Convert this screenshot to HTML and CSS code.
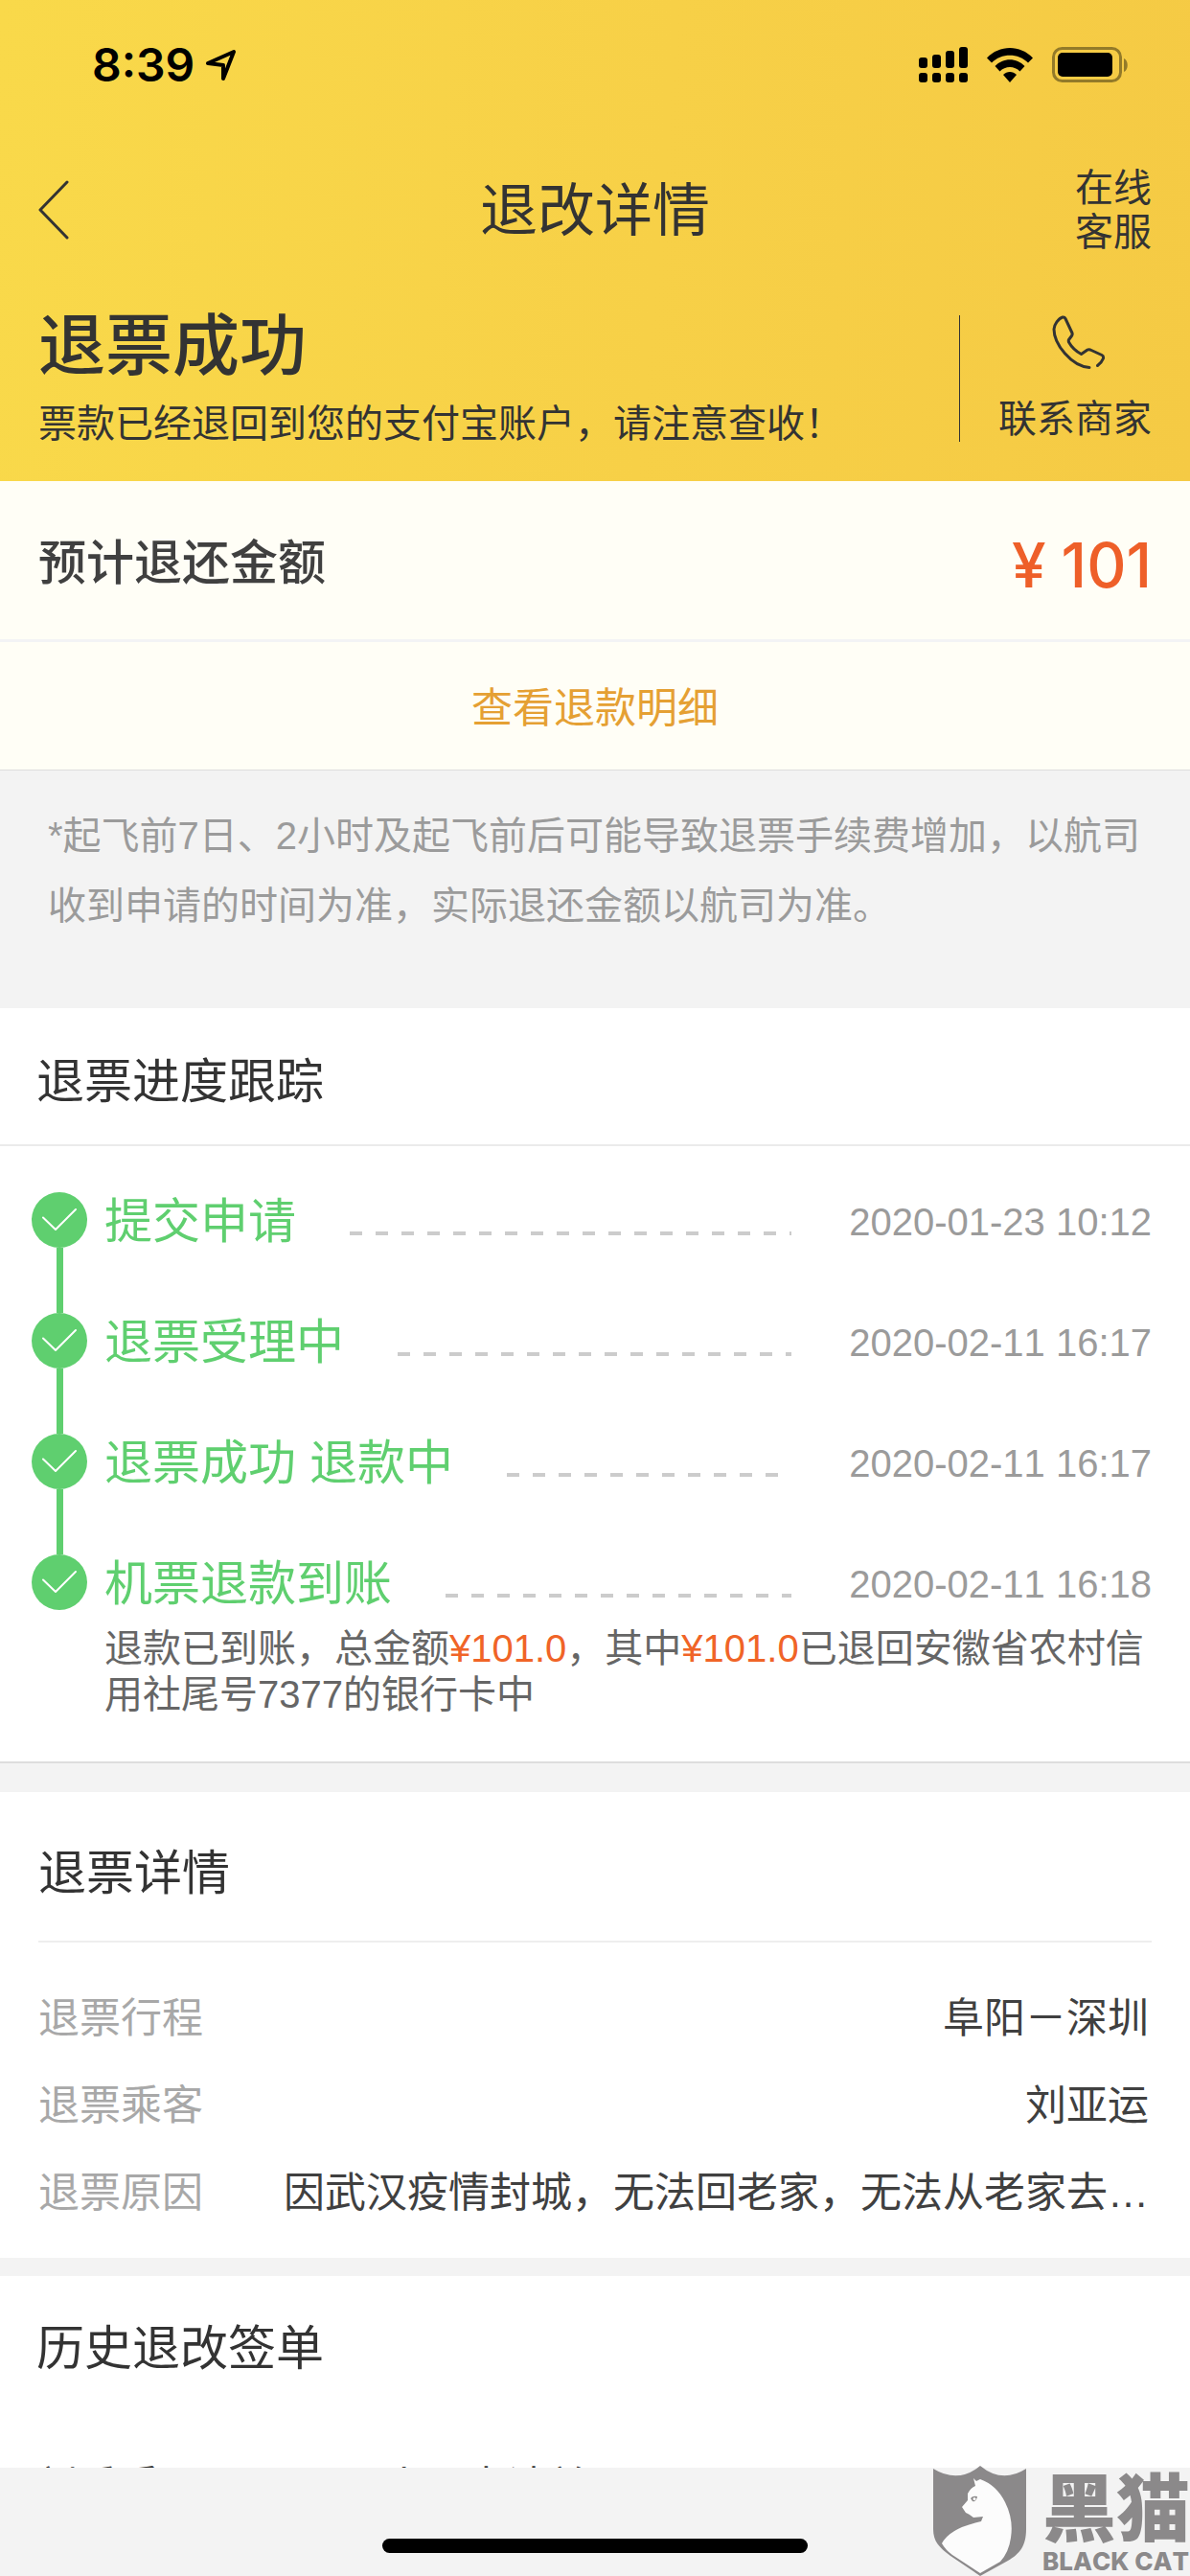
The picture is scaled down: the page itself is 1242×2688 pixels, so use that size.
FILE: index.html
```html
<!DOCTYPE html>
<html lang="zh-CN">
<head>
<meta charset="utf-8">
<meta name="viewport" content="width=device-width, initial-scale=1">
<title>退改详情</title>
<link rel="stylesheet" href="styles.css">
</head>
<body>
<div class="app">
  <header class="header">
    <div class="status-bar">
      <div class="status-left">
        <span class="clock">8:39</span>
        <svg class="icon-location" width="32" height="34" viewBox="0 0 32 34" aria-hidden="true"><path d="M29 3 18 31V17L2 15Z" fill="none" stroke="#000" stroke-width="4" stroke-linejoin="round"/></svg>
      </div>
      <div class="status-right">
        <svg width="51" height="38" viewBox="0 0 51 38" aria-hidden="true">
          <rect x="0" y="11" width="9" height="11" rx="3"/><rect x="14" y="8" width="9" height="14" rx="3"/><rect x="28" y="4" width="9" height="18" rx="3"/><rect x="42" y="0" width="9" height="22" rx="3"/>
          <rect x="0" y="27" width="9" height="10" rx="3"/><rect x="14" y="27" width="9" height="10" rx="3"/><rect x="28" y="27" width="9" height="10" rx="3"/><rect x="42" y="27" width="9" height="10" rx="3"/>
        </svg>
        <svg width="48" height="36" viewBox="0 0 48 36" aria-hidden="true">
          <path d="M0 10.500C13-3.500 35-3.500 48 10.500L43 15.500C33 5 15 5 5 15.500Z"/>
          <path d="M8.500 19C17 10 31 10 39.500 19L34.500 24.500C29 18.500 19 18.500 13.500 24.500Z"/>
          <path d="M17 28C21 24 27 24 31 28L24 36Z"/>
        </svg>
        <svg width="80" height="38" viewBox="0 0 80 38" aria-hidden="true">
          <rect x="1.500" y="1.500" width="70" height="34" rx="9" fill="none" stroke="#000" stroke-opacity=".4" stroke-width="3"/>
          <rect x="6" y="6" width="57" height="25" rx="5"/>
          <path d="M75 12C80 14 80 24 75 26Z" fill-opacity=".4"/>
        </svg>
      </div>
    </div>
    <nav class="nav">
      <a class="nav-back" href="#" aria-label="返回"><svg width="34" height="62" viewBox="0 0 34 62" aria-hidden="true"><path d="M30 2 2 31 30 60" fill="none" stroke="#333" stroke-width="3" stroke-linecap="round" stroke-linejoin="round"/></svg></a>
      <h1 class="nav-title">退改详情</h1>
      <a class="nav-service" href="#">在线<br>客服</a>
    </nav>
    <div class="result">
      <div class="result-text">
        <h2 class="result-title">退票成功</h2>
        <p class="result-desc">票款已经退回到您的支付宝账户，请注意查收！</p>
      </div>
      <a class="contact" href="#">
        <svg width="64" height="56" viewBox="-8 0 64 56" aria-hidden="true"><path d="M39 54.500C20 53 2 30 2 14.500C2 10 7 3 11 2Q13 1.500 14 3.500L21 18.500Q21.500 20 20.500 21.500L17.500 25.500Q17 26.500 17.500 28Q22 36 30.500 40.500L37 36Q38 35.500 40 36L52 41.500Q54 42.500 53.500 45Q52 49 47.500 52.500" fill="none" stroke="#333" stroke-width="3" stroke-linecap="round" stroke-linejoin="round"/></svg>
        <span>联系商家</span>
      </a>
    </div>
  </header>

  <main class="content">
    <section class="amount">
      <div class="amount-row">
        <h3 class="amount-label">预计退还金额</h3>
        <span class="amount-value"><span>¥</span><span>101</span></span>
      </div>
      <a class="amount-link" href="#">查看退款明细</a>
    </section>
    <p class="note">*起飞前7日、2小时及起飞前后可能导致退票手续费增加，以航司收到申请的时间为准，实际退还金额以航司为准。</p>

    <section class="progress">
      <h3 class="section-title progress-title">退票进度跟踪</h3>
      <ol class="steps">
        <li class="step">
          <svg class="step-mark" width="58" height="58" viewBox="0 0 58 58" aria-hidden="true"><circle cx="29" cy="29" r="29"/><path d="M12 26.500 25 39 46 18"/></svg>
          <span class="step-name">提交申请</span><span class="step-dash"></span><time class="step-time">2020-01-23 10:12</time>
        </li>
        <li class="step">
          <svg class="step-mark" width="58" height="58" viewBox="0 0 58 58" aria-hidden="true"><circle cx="29" cy="29" r="29"/><path d="M12 26.500 25 39 46 18"/></svg>
          <span class="step-name">退票受理中</span><span class="step-dash"></span><time class="step-time">2020-02-11 16:17</time>
        </li>
        <li class="step">
          <svg class="step-mark" width="58" height="58" viewBox="0 0 58 58" aria-hidden="true"><circle cx="29" cy="29" r="29"/><path d="M12 26.500 25 39 46 18"/></svg>
          <span class="step-name">退票成功 退款中</span><span class="step-dash"></span><time class="step-time">2020-02-11 16:17</time>
        </li>
        <li class="step">
          <svg class="step-mark" width="58" height="58" viewBox="0 0 58 58" aria-hidden="true"><circle cx="29" cy="29" r="29"/><path d="M12 26.500 25 39 46 18"/></svg>
          <span class="step-name">机票退款到账</span><span class="step-dash"></span><time class="step-time">2020-02-11 16:18</time>
        </li>
      </ol>
      <p class="step-detail">退款已到账，总金额<em>¥101.0</em>，其中<em>¥101.0</em>已退回安徽省农村信用社尾号7377的银行卡中</p>
    </section>

    <section class="details">
      <h3 class="section-title details-title">退票详情</h3>
      <dl class="details-list">
        <div class="detail"><dt>退票行程</dt><dd>阜阳－深圳</dd></div>
        <div class="detail"><dt>退票乘客</dt><dd>刘亚运</dd></div>
        <div class="detail"><dt>退票原因</dt><dd>因武汉疫情封城，无法回老家，无法从老家去…</dd></div>
      </dl>
    </section>

    <section class="history">
      <h3 class="section-title">历史退改签单</h3>
      <div class="history-row"><span>刘乘受理</span><span>小王申请单</span></div>
    </section>
  </main>

  <footer class="home-area"><div class="home-bar"></div></footer>

  <div class="watermark">
    <svg width="98" height="115" viewBox="0 0 98 115" aria-hidden="true">
      <path d="M0 3Q26 19 49 0Q72 19 97 3V66C97 84 90 92 78 99L49 115 18 94C6 85 0 79 0 66Z" fill="#8b898a"/>
      <path d="M42 13 45 16 49 14Q66 20 75 38Q84 56 81 75Q79 90 70 100L49 112 20 93Q13 88 9 81Q17 65 50 58L52 53 42 54Q37 50 34 49L30 43 36 36 36 29Q39 23 44 21Z" fill="#fcfcfc"/>
      <path d="M39 34Q41 31 46 32Q45 38 41 37Z" fill="#8b898a"/><circle cx="43" cy="34.500" r="1.500" fill="#fff"/>
    </svg>
    <div class="watermark-text"><span class="watermark-cn">黑猫</span><span class="watermark-en">BLACK CAT</span></div>
  </div>
</div>
</body>
</html>
```
FILE: styles.css
```css
* { box-sizing: border-box; margin: 0; padding: 0; }

body {
  font-family: "Liberation Sans", "Noto Sans CJK SC", sans-serif;
  font-size: 40px;
  line-height: 48px;
  font-kerning: none;
  color: #333;
  background: #f3f3f3;
}

a { color: inherit; text-decoration: none; }
h1, h2, h3 { font-weight: 400; }
ol { list-style: none; }
em { font-style: normal; }
svg { display: block; flex: none; }

.app {
  position: relative;
  display: flex;
  flex-direction: column;
  height: 100vh;
  overflow: hidden;
}

/* Header */
.header {
  flex: none;
  background: linear-gradient(95deg, #f9d94a, #f7d047 55%, #f5ca44);
}

.status-bar {
  display: flex;
  justify-content: space-between;
  align-items: center;
  height: 136px;
  padding: 0 64px 0 96px;
}

.status-left { display: flex; align-items: center; gap: 12px; }
.status-right { display: flex; align-items: center; gap: 20px; }

.clock {
  font-family: Inter, "Liberation Sans", sans-serif;
  font-size: 48px;
  font-weight: 600;
  color: #000;
}

.nav {
  display: grid;
  grid-template-columns: 1fr auto 1fr;
  align-items: center;
  height: 166px;
  padding: 0 40px;
}

.nav-back { justify-self: start; }
.nav-title { padding-top: 4px; font-size: 60px; line-height: 72px; }
.nav-service { justify-self: end; line-height: 46px; }

.result {
  display: flex;
  justify-content: space-between;
  padding: 22px 40px 36px;
}

.result-title { font-size: 70px; line-height: 76px; font-weight: 500; }
.result-desc { margin-top: 18px; line-height: 48px; }

.contact {
  display: flex;
  flex-direction: column;
  align-items: center;
  align-self: center;
  gap: 28px;
  padding-left: 40px;
  border-left: 1px solid #333;
}

/* Refund amount */
.content {
  flex: 1;
  min-height: 0;
  overflow: hidden;
  background: #fff;
}

.amount {
  background: #fffef6;
  border-bottom: 1px solid #ddd;
}

.amount-row {
  display: flex;
  justify-content: space-between;
  align-items: center;
  height: 168px;
  padding: 6px 40px 0;
  border-bottom: 3px solid #f3f3f5;
}

.amount-label { font-size: 50px; line-height: 60px; font-weight: 500; color: #404040; }

.amount-value {
  display: flex;
  gap: 16px;
  padding-top: 4px;
  font-family: Inter, "Liberation Sans", sans-serif;
  font-size: 64px;
  line-height: 72px;
  font-weight: 500;
  color: #ee5f29;
}

.amount-link {
  display: block;
  padding-top: 6px;
  font-size: 43px;
  line-height: 127px;
  text-align: center;
  color: #e5a033;
}

.note {
  padding: 32px 40px 70px 50px;
  line-height: 73px;
  color: #9b9b9b;
  background: #f3f3f3;
}

.section-title { font-size: 50px; line-height: 60px; }

/* Progress */
.progress { border-bottom: 2px solid #ddd; padding-bottom: 46px; }

.progress-title {
  padding: 47px 38px 35px;
  border-bottom: 2px solid #ebebeb;
}

.steps { padding: 48px 40px 0 33px; }

.step {
  display: flex;
  align-items: center;
  height: 58px;
  position: relative;
}

.step + .step { margin-top: 68px; }

.step + .step::before {
  content: "";
  position: absolute;
  left: 26px;
  bottom: 100%;
  width: 7px;
  height: 68px;
  background: #5fcf6f;
}

.step-mark circle { fill: #5fcf6f; }
.step-mark path { fill: none; stroke: #fff; stroke-width: 2; stroke-linecap: round; stroke-linejoin: round; }
.step-name { margin-left: 18px; padding-top: 4px; font-size: 50px; line-height: 60px; color: #5fcf6f; }

.step-dash {
  flex: 1;
  height: 4px;
  margin: 28px 60px 0 56px;
  background: repeating-linear-gradient(90deg, #ccc 0 13px, transparent 13px 27px);
}

.step-time { padding-top: 4px; color: #9b9b9b; }
.step-detail { padding: 16px 40px 0 109px; color: #666; }
.step-detail em { color: #f06427; }

/* Refund details */
.details {
  padding: 0 40px 22px;
  border-top: 30px solid #f3f3f3;
  border-bottom: 19px solid #f3f3f3;
}

.details-title { padding: 55px 0 40px; border-bottom: 2px solid #eee; }
.details-list { padding-top: 34px; font-size: 43px; line-height: 91px; }
.detail { display: flex; justify-content: space-between; gap: 80px; padding-right: 3px; }
.detail dt { flex: none; color: #a8a8a8; }
.detail dd { color: #404040; white-space: nowrap; overflow: hidden; text-overflow: ellipsis; }

/* History */
.history { padding: 46px 38px 0; }
.history-row { display: flex; gap: 190px; margin-top: 84px; font-size: 43px; line-height: 60px; }

.home-area {
  flex: none;
  height: 113px;
  padding-top: 74px;
  background: #f3f3f3;
}

.home-bar { width: 444px; height: 15px; margin: 0 auto; border-radius: 8px; background: #000; }

.watermark {
  position: absolute;
  right: 0;
  bottom: 0;
  display: flex;
  gap: 16px;
  color: #8b898a;
}

.watermark-text { display: flex; flex-direction: column; padding-top: 6px; }
.watermark-cn { font-size: 77px; line-height: 80px; font-weight: 900; }
.watermark-en { font-family: Inter, "Liberation Sans", sans-serif; font-size: 26px; line-height: 28px; font-weight: 800; }
```
